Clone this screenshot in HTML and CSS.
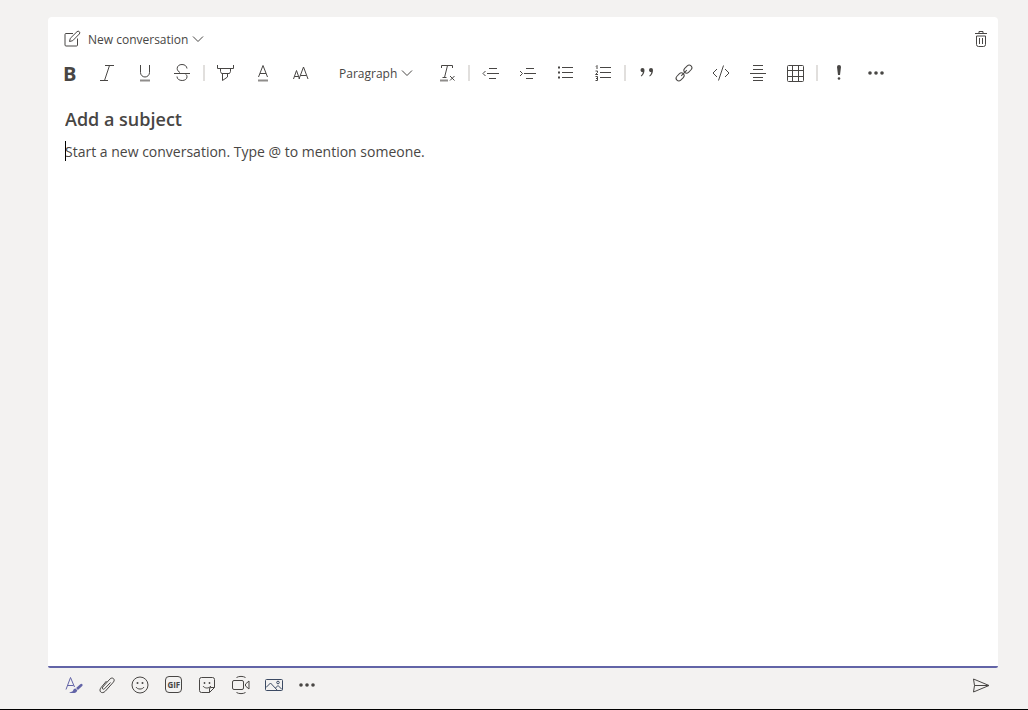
FILE: index.html
```html
<!DOCTYPE html>
<html lang="en">
<head>
    <meta charset="UTF-8">
    <meta name="viewport" content="width=device-width, initial-scale=1.0">
    <title>New conversation</title>
    <link rel="stylesheet" href="styles.css">
</head>
<body>
    <main class="composer">
        <div class="top-row">
            <label class="dropdown post-type">
                <svg class="icon" viewBox="0 0 20 20"><path d="M11 4.500H4a1 1 0 0 0-1 1V16a1 1 0 0 0 1 1h10.500a1 1 0 0 0 1-1V9.500M7.500 12.500l.8-3.200 6.700-6.600a1.600 1.600 0 0 1 2.300 2.300l-6.600 6.700z"/></svg>
                <select aria-label="Post type">
                    <option>New conversation</option>
                    <option>Announcement</option>
                </select>
                <svg class="chevron" viewBox="0 0 12 8"><path d="M1 1.500l5 5 5-5"/></svg>
            </label>
            <button class="delete" aria-label="Delete">
                <svg class="icon" viewBox="0 0 20 20"><path d="M4 4.500h12M8 4V2.500h4V4M5.500 7v8.500a2 2 0 0 0 2 2h5a2 2 0 0 0 2-2V7zM8.500 9v6M11.500 9v6"/></svg>
            </button>
        </div>

        <div class="toolbar" role="toolbar" aria-label="Format">
            <div class="group four">
                <button class="bold" aria-label="Bold">B</button>
                <button aria-label="Italic"><svg class="icon" viewBox="0 0 20 20"><path d="M8 2.500h9M3 17.500h8M12.500 2.500l-5 15"/></svg></button>
                <button aria-label="Underline"><svg class="icon" viewBox="0 0 20 20"><path d="M5.500 2v7.500a4.500 4.500 0 0 0 9 0V2"/><path class="soft" d="M5 17.500h10"/></svg></button>
                <button aria-label="Strikethrough"><svg class="icon" viewBox="0 0 20 20"><path d="M15 5.500c-.3-2.300-2-4-5-4-2.800 0-4.800 1.500-4.800 4 0 2 1.200 3 2.800 4M2 10.500h16M13.500 11c1 .7 1.500 1.700 1.500 2.800 0 2.300-2 3.700-4.800 3.700-3 0-5.200-1.500-5.200-4"/></svg></button>
            </div>
            <span class="separator"></span>
            <div class="group three">
                <button aria-label="Highlight"><svg class="icon" viewBox="0 0 20 20"><path d="M1.500 2v3.500h16V2M4.500 5.500v3l1 2h8l1-2v-3M6.500 10.500v7l5-3.500v-3.500"/></svg></button>
                <button aria-label="Font color"><svg class="icon" viewBox="0 0 20 20"><path d="M5.500 14L10 2.500 14.500 14M7 10.500h6"/><path class="soft" d="M5 17.500h10"/></svg></button>
                <button aria-label="Font size"><svg class="icon" viewBox="0 0 20 20"><path d="M3.500 16l3-8.500 3 8.500M4.500 13.500h4M9 16l4.500-12L18 16M10.500 12.500h6"/></svg></button>
            </div>
            <label class="dropdown paragraph">
                <select aria-label="Paragraph style">
                    <option>Paragraph</option>
                    <option>Heading 1</option>
                </select>
                <svg class="chevron" viewBox="0 0 12 8"><path d="M1 1.500l5 5 5-5"/></svg>
            </label>
            <div class="group one">
                <button aria-label="Clear all formatting"><svg class="icon" viewBox="0 0 20 20"><path d="M4.500 5V2.500h11V5M10.500 2.500l-3 12M5.500 14.500h4M13 13l4.500 4.500M17.500 13L13 17.500"/><path class="soft" d="M3 17.500h8"/></svg></button>
            </div>
            <span class="separator"></span>
            <div class="group four">
                <button aria-label="Decrease indent"><svg class="icon" viewBox="0 0 20 20"><path d="M4.500 8L2 10.500 4.500 13M6 10.500h12M8 5.500h8M8 15.500h7"/></svg></button>
                <button aria-label="Increase indent"><svg class="icon" viewBox="0 0 20 20"><path d="M2 8l2.500 2.500L2 13M6 10.500h12M8 5.500h8M8 15.500h7"/></svg></button>
                <button aria-label="Bulleted list"><svg class="icon" viewBox="0 0 20 20"><path d="M6 4.500h11M6 9.500h11M6 14.500h11"/><path class="solid" d="M2 3.500h2v2H2zM2 8.500h2v2H2zM2 13.500h2v2H2z"/></svg></button>
                <button aria-label="Numbered list"><svg class="icon" viewBox="0 0 20 20"><path d="M7 4.500h11M7 9.500h11M7 14.500h11M3 3.500l1-1V6M2.500 8h2v1.500l-2 2H5M2.500 13.500h2v4h-2M3 15.500h1.500"/></svg></button>
            </div>
            <span class="separator"></span>
            <div class="group five">
                <button aria-label="Quote"><svg class="icon" viewBox="0 0 20 20"><path class="solid" d="M3.500 7a2 2 0 1 1 4 0c0 2.800-1 5-3.200 6.500l-.5-.8C5.200 11.500 5.700 10.400 5.800 9 4.500 9.200 3.500 8.300 3.500 7zM12 7a2 2 0 1 1 4 0c0 2.800-1 5-3.200 6.500l-.5-.8c1.400-1.200 1.900-2.300 2-3.700C13 9.200 12 8.300 12 7z"/></svg></button>
                <button aria-label="Insert link"><svg class="icon" viewBox="0 0 20 20"><g transform="rotate(-45 10 10)"><rect x="0" y="7.300" width="9" height="5.400" rx="2.700"/><rect x="11" y="7.300" width="9" height="5.400" rx="2.700"/><path d="M6 10h8"/></g></svg></button>
                <button aria-label="Code snippet"><svg class="icon" viewBox="0 0 20 20"><path d="M6 6l-4 4 4 4M14 6l4 4-4 4M12.500 2.500l-5 15"/></svg></button>
                <button aria-label="Horizontal rule"><svg class="icon" viewBox="0 0 20 20"><path d="M5 2.500h10M5 6.500h10M2 10.500h16M5 14.500h10M5 17.500h10"/></svg></button>
                <button aria-label="Insert table"><svg class="icon" viewBox="0 0 20 20"><rect x="2.500" y="2.500" width="16" height="16" rx="1"/><path d="M7.500 2.500v16M13.500 2.500v16M2.500 7.500h16M2.500 13.500h16"/></svg></button>
            </div>
            <span class="separator"></span>
            <div class="group two">
                <button aria-label="Mark as important"><svg class="icon" viewBox="0 0 20 20"><path class="solid" d="M8 4a2 2 0 0 1 4 0l-1 8H9z"/><circle class="solid" cx="10" cy="15.500" r="1.300"/></svg></button>
                <button aria-label="More options"><svg class="icon" viewBox="0 0 20 20"><g class="solid"><circle cx="4" cy="10" r="1.800"/><circle cx="10" cy="10" r="1.800"/><circle cx="16" cy="10" r="1.800"/></g></svg></button>
            </div>
        </div>

        <input class="subject" type="text" placeholder="Add a subject" aria-label="Subject">
        <div class="message">
            <textarea placeholder="Start a new conversation. Type @ to mention someone." aria-label="Message"></textarea>
            <span class="caret"></span>
        </div>
    </main>

    <footer class="actions">
        <div class="group attach">
            <button class="active" aria-label="Format"><svg class="icon" viewBox="0 0 20 20"><path d="M2 14.500L6.500 2.500 10.500 12M3.500 10.500h6"/><path class="solid" d="M18.500 9.500a1.500 1.500 0 0 0-2.200-.3l-4.200 3.900 1.800 1.900 4.300-4a1.200 1.200 0 0 0 .3-1.500zM11.500 13.500c-1.600.1-2.200 1.200-2.500 2.300-.3.900-1.500 1.400-4 1.400 3 1.500 7.800 1.400 8.300-2z"/></svg></button>
            <button aria-label="Attach"><svg class="icon" viewBox="0 0 20 20"><path d="M13.500 7.500l-6 6.300c-1.300 1.300-3-.3-1.800-1.700l7.200-8c2.500-2.700 5.800.3 3.500 3l-8 9c-3.500 3.700-7.500 0-4.200-3.700L9.500 6"/></svg></button>
            <button aria-label="Emoji"><svg class="icon" viewBox="0 0 20 20"><circle cx="10" cy="10" r="8"/><path d="M6 12c1.500 2.700 6.500 2.700 8 0"/><circle class="solid" cx="7.500" cy="8" r="1"/><circle class="solid" cx="12.500" cy="8" r="1"/></svg></button>
            <button aria-label="GIF"><span class="gif">GIF</span></button>
            <button aria-label="Sticker"><svg class="icon" viewBox="0 0 20 20"><path d="M4.500 2.500h11a2 2 0 0 1 2 2v8l-5 5h-8a2 2 0 0 1-2-2v-11a2 2 0 0 1 2-2zM17.500 12.500h-3.500a1.500 1.500 0 0 0-1.500 1.500v3.500M6 11c1.500 2.300 5.500 3 8 0"/><circle class="solid" cx="7.500" cy="8" r="0.900"/><circle class="solid" cx="12.500" cy="8" r="0.900"/></svg></button>
            <button aria-label="Meet now"><svg class="icon" viewBox="0 0 20 20"><rect x="1.500" y="5.500" width="11" height="9" rx="1.500"/><path d="M14.500 9l3.500-3v8l-3.500-3zM5.500 2.500c2.500-1.500 6.500-1.500 9 0M5.500 17.500c2.500 1.500 6.500 1.500 9 0"/></svg></button>
            <button class="picture" aria-label="Stream"><svg class="icon" viewBox="0 0 20 20"><rect x="1.500" y="4.500" width="17" height="11" rx="1"/><path d="M2 12.500l4.500-4.500 7 7.500M11.500 13l2.500-2.500 4 4"/><circle cx="14" cy="7.500" r="1.300"/></svg></button>
            <button aria-label="More"><svg class="icon" viewBox="0 0 20 20"><g class="solid"><circle cx="4" cy="10" r="1.800"/><circle cx="10" cy="10" r="1.800"/><circle cx="16" cy="10" r="1.800"/></g></svg></button>
        </div>
        <button aria-label="Send"><svg class="icon" viewBox="0 0 20 20"><path d="M2.500 4l15.500 6.500-15.500 6.500 1-6.500zM3.500 10.500H18"/></svg></button>
    </footer>
</body>
</html>
```
FILE: styles.css
```css
* {
    box-sizing: border-box;
}
body {
    margin: 0;
    min-height: 100vh;
    display: flex;
    flex-direction: column;
    padding: 17px 30px 0 48px;
    background: #f3f2f1;
    border-bottom: 1px solid #000;
    color: #484644;
    font-family: "Segoe UI", "Open Sans", sans-serif;
    font-size: 12px;
}
button, select, input, textarea {
    margin: 0;
    padding: 0;
    border: none;
    outline: none;
    background: none;
    color: inherit;
    font: inherit;
}
button {
    display: flex;
    align-items: center;
    justify-content: center;
    height: 32px;
    cursor: pointer;
}
.icon {
    width: 20px;
    height: 20px;
    flex: none;
}
.icon, .chevron {
    fill: none;
    stroke: currentColor;
    stroke-width: 1;
    stroke-linejoin: round;
}
.solid {
    fill: currentColor;
    stroke: none;
}
.soft {
    stroke: #8f8d8b;
    stroke-width: 2;
}

/* editor card */
.composer {
    flex: 1;
    display: flex;
    flex-direction: column;
    background: #fff;
    border-bottom: 2px solid #6264a7;
    border-radius: 4px 4px 2px 2px;
}
.top-row {
    display: flex;
    align-items: center;
    justify-content: space-between;
    height: 40px;
    padding: 5px 6px 1px 14px;
}
.dropdown {
    position: relative;
    display: flex;
    align-items: center;
}
.dropdown select {
    appearance: none;
    height: 24px;
    cursor: pointer;
}
.chevron {
    position: absolute;
    right: 0;
    width: 12px;
    height: 8px;
    pointer-events: none;
}
.post-type {
    gap: 6px;
}
.post-type select {
    width: 116px;
}
.paragraph {
    width: 74px;
    margin: 0 15px 0 20px;
}
.paragraph select {
    width: 74px;
}
.delete {
    width: 22px;
}

.toolbar {
    display: flex;
    align-items: center;
    height: 32px;
    margin-left: 3px;
}
.group {
    display: grid;
    grid-auto-flow: column;
    grid-auto-columns: 1fr;
}
.one {
    width: 38px;
}
.two {
    width: 75px;
}
.three {
    width: 112px;
}
.four {
    width: 150px;
}
.five {
    width: 186px;
}
.separator {
    width: 2px;
    height: 16px;
    margin: 0 2px;
    background: #e1dfdd;
}
.bold {
    font-size: 20px;
    font-weight: 700;
}

.subject {
    height: 28px;
    margin: 16px 17px 0;
    font-size: 18px;
    font-weight: 600;
}
.message {
    position: relative;
    flex: 1;
    display: flex;
    margin: 8px 17px 16px;
}
.message textarea {
    flex: 1;
    resize: none;
    font-size: 14px;
    line-height: 22px;
}
.caret {
    position: absolute;
    top: 0;
    left: 0;
    width: 1px;
    height: 20px;
    background: #000;
}
::placeholder {
    color: #484644;
    opacity: 1;
}

/* buttons under the card */
.actions {
    display: flex;
    align-items: center;
    justify-content: space-between;
    height: 41px;
    padding: 0 7px 8px 9px;
}
.attach {
    width: 267px;
}
.active {
    color: #6264a7;
}
.picture {
    color: #3b4a63;
}
.gif {
    width: 17px;
    height: 17px;
    border: 1px solid #484644;
    border-radius: 4px;
    font-size: 8px;
    font-weight: 700;
    line-height: 15px;
    text-align: center;
}
```
